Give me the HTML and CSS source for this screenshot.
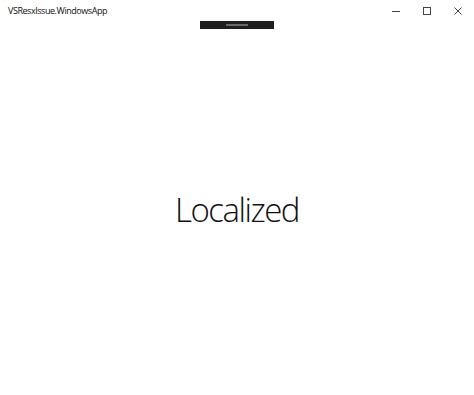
FILE: index.html
```html
<!DOCTYPE html>
<html>
<head>
<meta charset="utf-8">
<link rel="stylesheet" href="styles.css">
</head>
<body>
<div class="window">
  <header class="titlebar">
    <span class="title">VSResxIssue.WindowsApp</span>
    <div class="controls">
      <span class="ctl">
        <svg width="8" height="8" viewBox="0 0 8 8"><path d="M0 4.5H8" stroke="#444" stroke-width="1"/></svg>
      </span>
      <span class="ctl">
        <svg width="8" height="8" viewBox="0 0 8 8"><rect x="0.5" y="0.5" width="7" height="7" fill="none" stroke="#444" stroke-width="1"/></svg>
      </span>
      <span class="ctl">
        <svg width="8" height="8" viewBox="0 0 8 8"><path d="M0.5 0.5L7.5 7.5M7.5 0.5L0.5 7.5" stroke="#444" stroke-width="1"/></svg>
      </span>
    </div>
    <div class="toolbar"><span class="grip"></span></div>
  </header>
  <main class="content">
    <span class="label">Localized</span>
  </main>
</div>
</body>
</html>
```
FILE: styles.css
```css
html, body {
  margin: 0;
  padding: 0;
  background: #ffffff;
}
.window {
  width: 474px;
  height: 395px;
  display: flex;
  flex-direction: column;
  font-family: "Open Sans", "Noto Sans", sans-serif;
  color: #000;
}
.titlebar {
  position: relative;
  height: 32px;
  display: flex;
  align-items: flex-start;
  justify-content: space-between;
  flex-shrink: 0;
}
.title {
  font-size: 9px;
  line-height: 12px;
  padding: 5px 0 0 8px;
  letter-spacing: -0.45px;
  color: #111;
}
.controls {
  display: flex;
  padding-right: 1px;
}
.ctl {
  width: 31px;
  height: 22px;
  display: flex;
  align-items: center;
  justify-content: center;
}
.toolbar {
  position: absolute;
  left: 200px;
  top: 21px;
  width: 74px;
  height: 8px;
  background: #1f1f1f;
  display: flex;
  align-items: center;
  justify-content: center;
}
.grip {
  width: 22px;
  height: 2px;
  background: #6a6a6a;
}
.content {
  flex: 1;
  display: flex;
  align-items: center;
  justify-content: center;
  padding-bottom: 8px;
}
.label {
  font-size: 33px;
  font-weight: 300;
  color: #111;
  letter-spacing: -1.5px;
}
```
